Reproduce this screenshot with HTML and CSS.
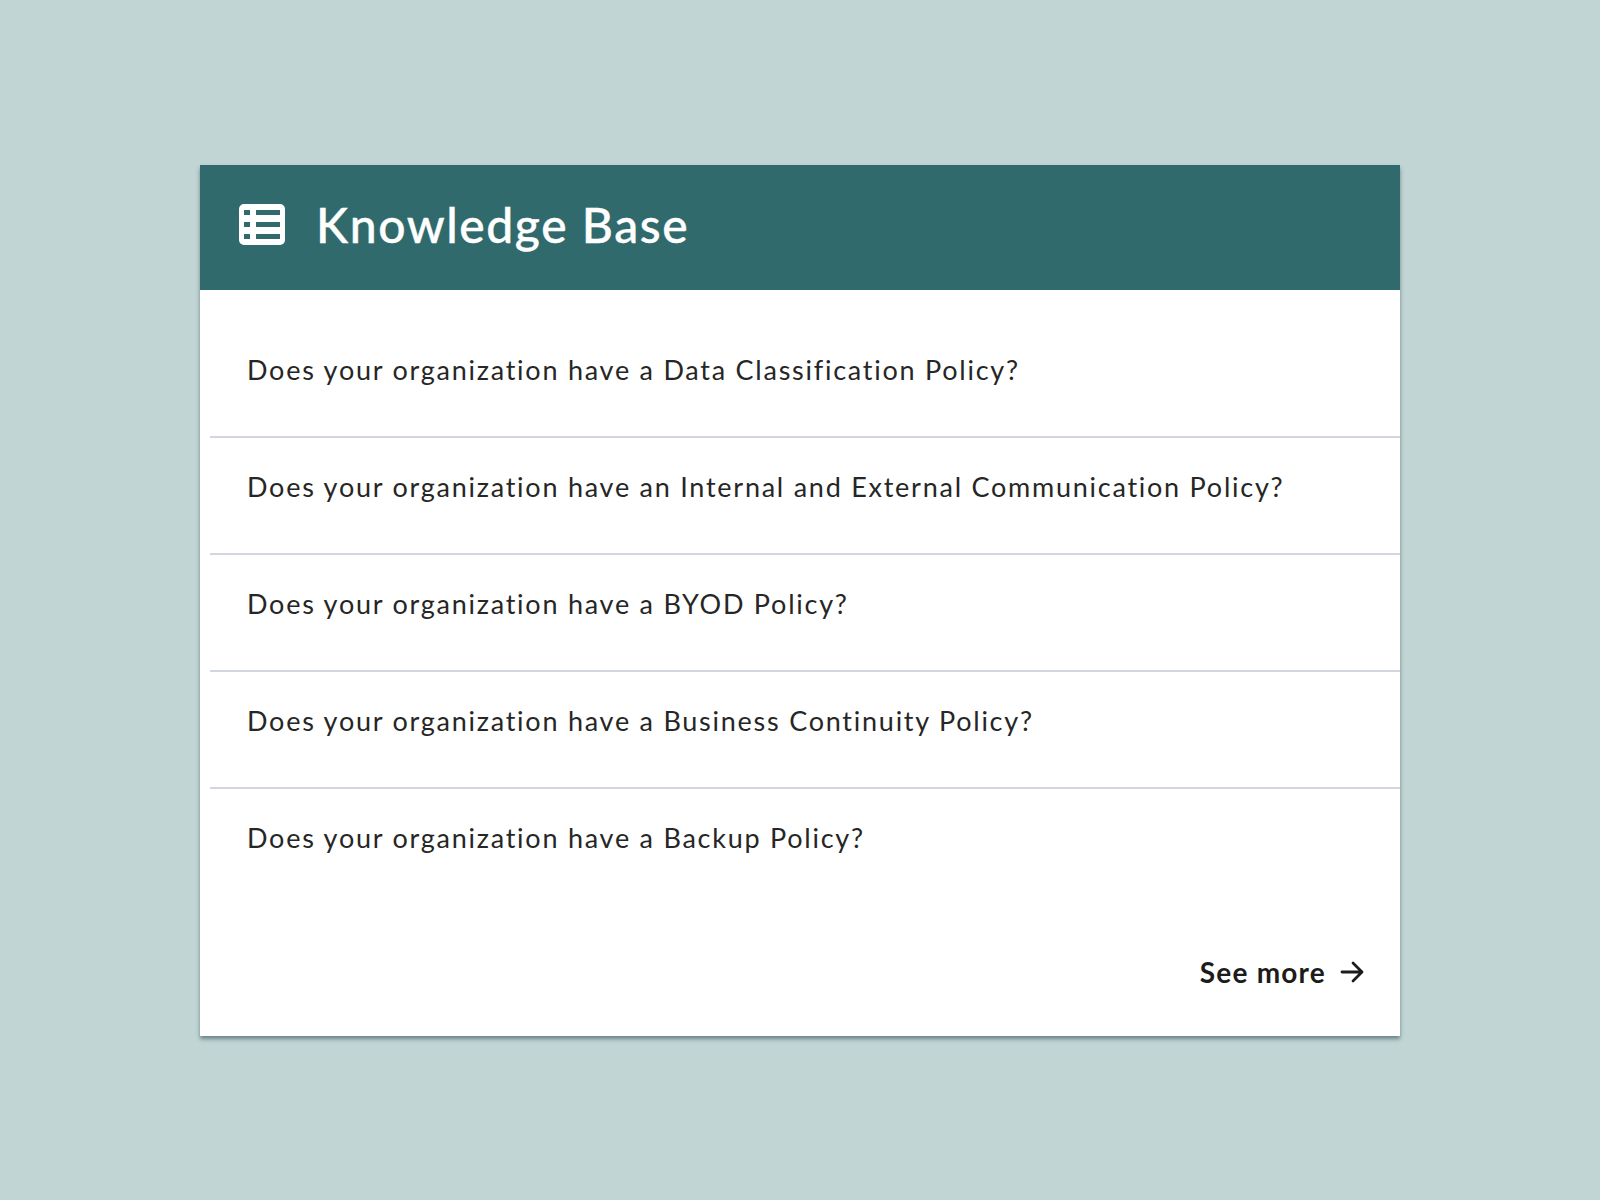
FILE: index.html
```html
<!DOCTYPE html>
<html lang="en">
<head>
    <meta charset="UTF-8">
    <meta name="viewport" content="width=device-width, initial-scale=1.0">
    <title>Knowledge Base</title>
    <link rel="stylesheet" href="styles.css">
</head>
<body>

<div class="kb-card">
    <div class="kb-header">
        <svg class="kb-icon" viewBox="0 0 46 41" width="46" height="41" aria-hidden="true">
            <path fill="#fff" fill-rule="evenodd" d="M5 0h36a5 5 0 0 1 5 5v31a5 5 0 0 1-5 5H5a5 5 0 0 1-5-5V5a5 5 0 0 1 5-5zM5 6v5h6V6zM17 6v5h24V6zM5 18v5h6v-5zM17 18v5h24v-5zM5 30v5h6v-5zM17 30v5h24v-5z"/>
        </svg>
        <div class="kb-title">Knowledge Base</div>
    </div>

    <div class="kb-list">
        <div class="kb-item">Does your organization have a Data Classification Policy?</div>
        <div class="kb-item">Does your organization have an Internal and External Communication Policy?</div>
        <div class="kb-item">Does your organization have a BYOD Policy?</div>
        <div class="kb-item">Does your organization have a Business Continuity Policy?</div>
        <div class="kb-item">Does your organization have a Backup Policy?</div>
    </div>

    <div class="kb-footer">
        <a class="see-more" href="#">
            See more
            <svg viewBox="0 0 24 22" width="24" height="22" aria-hidden="true">
                <path fill="none" stroke="#1c1c1c" stroke-width="2.8" stroke-linecap="round" stroke-linejoin="round" d="M2 11h20M13 2l9 9-9 9"/>
            </svg>
        </a>
    </div>
</div>

</body>
</html>
```

FILE: styles.css
```css
body {
    font-family: "Lato", "Open Sans", sans-serif;
    margin: 0;
    padding: 165px 0 0;
    background: #c1d5d4;
    display: flex;
    justify-content: center;
    align-items: flex-start;
    min-height: 1035px;
}

.kb-card {
    width: 1200px;
    background: #fff;
    box-shadow: 0 3px 4px rgba(50, 80, 85, 0.6);
}

.kb-header {
    background: #306a6d;
    height: 125px;
    padding: 0 0 6px 39px;
    box-sizing: border-box;
    display: flex;
    align-items: center;
    gap: 31px;
}

.kb-title {
    color: #fff;
    font-size: 48px;
    font-weight: 500;
    letter-spacing: 1.6px;
    -webkit-text-stroke: 0.4px #fff;
}

.kb-list {
    padding-top: 31px;
}

.kb-item {
    margin-left: 10px;
    padding-left: 37px;
    height: 117px;
    line-height: 98px;
    box-sizing: border-box;
    border-bottom: 2px solid #d2d6e0;
    font-size: 27px;
    letter-spacing: 1.75px;
    color: #262626;
}

.kb-item:last-child {
    border-bottom: none;
}

.kb-footer {
    display: flex;
    justify-content: flex-end;
    padding: 49px 36px 47px 0;
}

.see-more {
    display: flex;
    align-items: center;
    gap: 14px;
    color: #1c1c1c;
    font-size: 28px;
    font-weight: 700;
    letter-spacing: 1.2px;
    text-decoration: none;
}
```
